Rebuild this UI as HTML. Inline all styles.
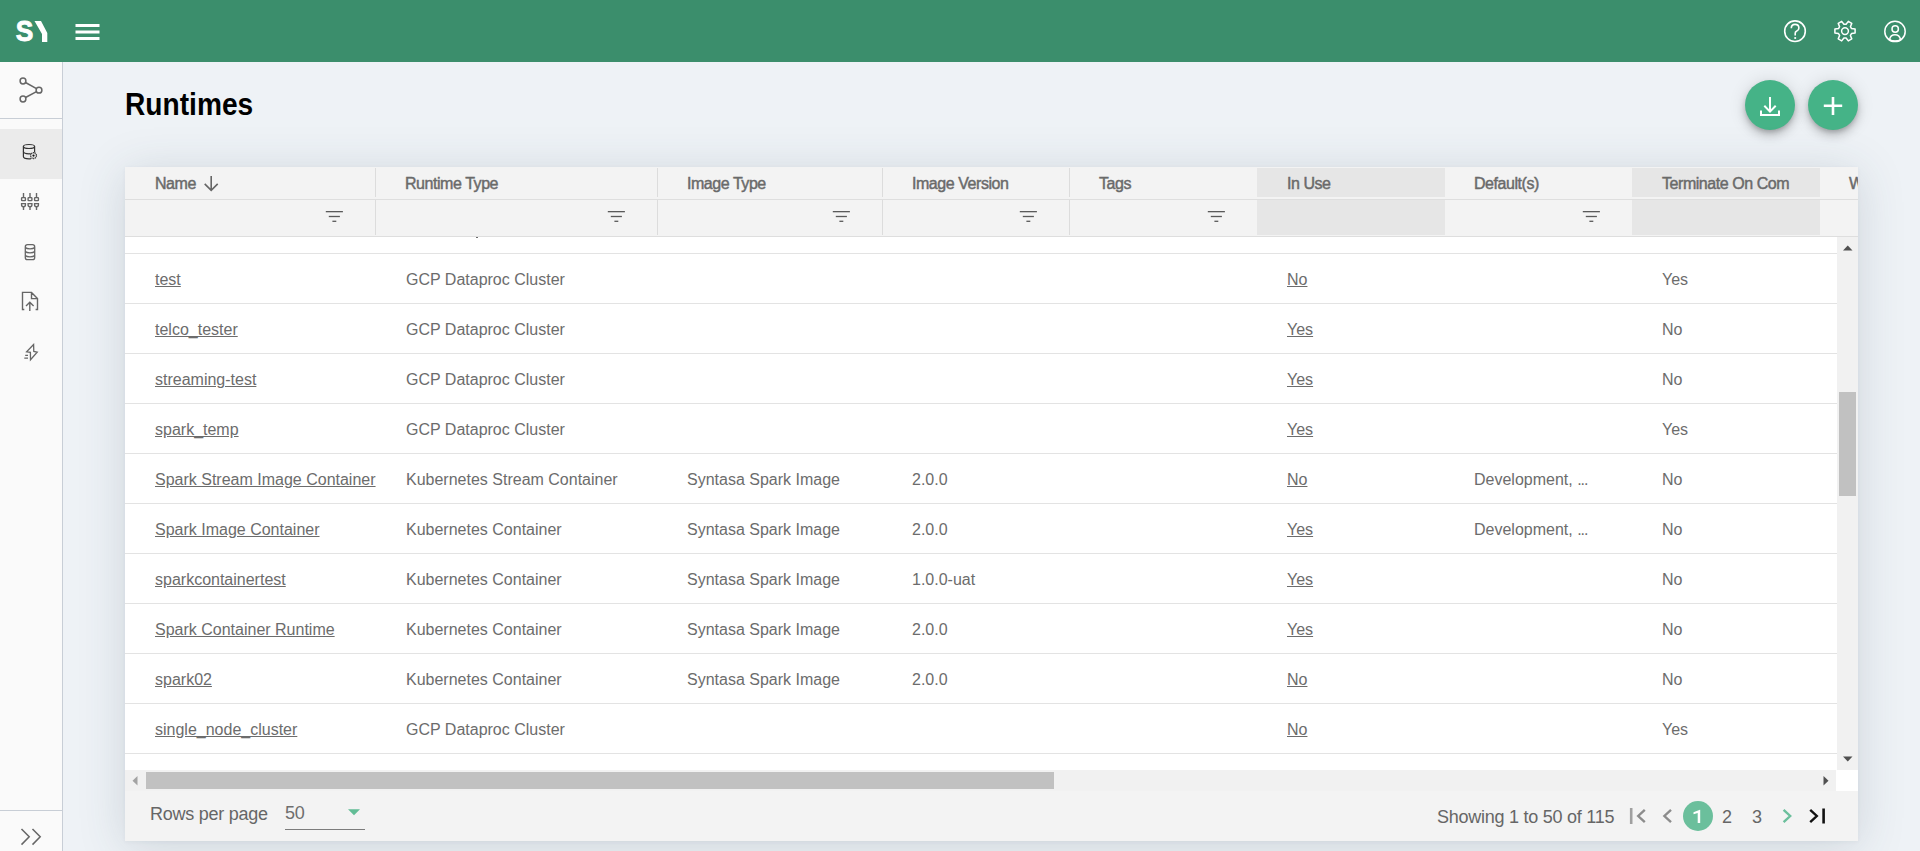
<!DOCTYPE html>
<html><head><meta charset="utf-8">
<style>
*{box-sizing:border-box;margin:0;padding:0}
html,body{width:1920px;height:851px;overflow:hidden;background:#eef2f6;font-family:"Liberation Sans",sans-serif;color:#6b6b6b}
.abs{position:absolute}
#top{position:absolute;left:0;top:0;width:1920px;height:62px;background:#3b8e6c}
#side{position:absolute;left:0;top:62px;width:63px;height:789px;background:#fafafa;border-right:1px solid #c8ced6}
#side .sep{position:absolute;left:0;width:62px;height:1px;background:#c8ced6}
#side .sel{position:absolute;left:0;top:67px;width:62px;height:50px;background:#ebebeb}
#side svg{position:absolute}
h1{position:absolute;left:125px;top:86px;font-size:31.7px;font-weight:bold;color:#000;transform:scaleX(0.888);transform-origin:0 0;white-space:nowrap}
.fab{position:absolute;top:80px;width:50px;height:50px;border-radius:50%;background:#45b387;box-shadow:0 3px 5px -1px rgba(0,0,0,.2),0 6px 10px 0 rgba(0,0,0,.14),0 1px 18px 0 rgba(0,0,0,.12)}
.fab svg{position:absolute;left:0;top:0}
#card{position:absolute;left:125px;top:167px;width:1733px;height:674px;background:#f3f3f3;box-shadow:0 6px 44px rgba(50,70,90,.17),0 1px 4px rgba(50,70,90,.05);overflow:hidden}
.hcell{position:absolute;top:1px;height:31px;font-size:16px;font-weight:normal;-webkit-text-stroke:0.45px currentColor;color:#6a6a6a;line-height:32px;padding-left:30px;white-space:nowrap;overflow:hidden;letter-spacing:-0.45px}
.vsep{position:absolute;width:1px;background:#dcdcdc}
.hline{position:absolute;left:0;height:1px;background:#dedede}
.gcell{position:absolute;background:#e6e6e6}
.filt{position:absolute}
#body{position:absolute;left:0;top:70px;width:1712px;height:533px;background:#fff;overflow:hidden}
.row{position:absolute;left:0;width:1712px;height:50px;border-bottom:1px solid #e3e3e3}
.c{position:absolute;top:1px;line-height:50px;font-size:16px;color:#6c6c6c;white-space:nowrap}
.u{text-decoration:underline;text-underline-offset:0.5px}
#vs{position:absolute;left:1712px;top:70px;width:21px;height:533px;background:#f1f1f1}
#hs{position:absolute;left:0;top:603px;width:1711px;height:21px;background:#f1f1f1}
#corner{position:absolute;left:1711px;top:603px;width:22px;height:21px;background:#fff}
#foot{position:absolute;left:0;top:624px;width:1733px;height:50px;background:#f3f3f3}
.ft{position:absolute;font-size:18px;color:#666;white-space:nowrap;letter-spacing:-0.25px}
</style></head><body>
<div id="top">
  <svg class="abs" style="left:0;top:0" width="120" height="62" viewBox="0 0 120 62">
    <text x="15.8" y="41.4" font-family="Liberation Sans" font-weight="bold" font-size="29.5" fill="#fff" stroke="#fff" stroke-width="0.9" textLength="17.6" lengthAdjust="spacingAndGlyphs">S</text>
    <path d="M34.5 21 L41 21 L47.3 33 L47.3 42 L42 42 L42 34 Z" fill="#fff"/>
    <rect x="75.5" y="24" width="24" height="3" fill="#fff"/>
    <rect x="75.5" y="30.5" width="24" height="3" fill="#fff"/>
    <rect x="75.5" y="37" width="24" height="3" fill="#fff"/>
  </svg>
  <svg class="abs" style="left:1770px;top:6px" width="150" height="50" viewBox="0 0 150 50">
    <g fill="none" stroke="#fff" stroke-width="1.6">
      <circle cx="25" cy="25.2" r="10.3"/>
      <path d="M21.3 22.2 C21.3 19.5 23 18.4 25 18.4 C27.3 18.4 28.9 19.9 28.9 21.9 C28.9 23.6 27.9 24.6 26.5 25.2 C25.5 25.7 25.2 26.3 25.2 27.2 V29.6"/>
    </g>
    <rect x="24.3" y="31.1" width="1.8" height="1.8" fill="#fff"/>
    <g fill="none" stroke="#fff" stroke-width="1.5" stroke-linejoin="round">
      <path d="M81.50 22.60 L85.10 23.10 L85.10 27.10 L81.50 27.60 L80.42 29.48 L81.78 32.85 L78.32 34.85 L76.08 31.98 L73.92 31.98 L71.68 34.85 L68.22 32.85 L69.58 29.48 L68.50 27.60 L64.90 27.10 L64.90 23.10 L68.50 22.60 L69.58 20.72 L68.22 17.35 L71.68 15.35 L73.92 18.22 L76.08 18.22 L78.32 15.35 L81.78 17.35 L80.42 20.72 Z"/>
      <circle cx="75" cy="25.1" r="3.4"/>
    </g>
    <g fill="none" stroke="#fff" stroke-width="1.5">
      <circle cx="125" cy="25.4" r="10.2"/>
      <circle cx="125.2" cy="23" r="3.2"/>
      <path d="M119.6 33.6 C120.2 30.3 122.5 28.8 125 28.8 C127.5 28.8 129.8 30.3 130.6 33.6 C128.5 35.4 121.7 35.4 119.6 33.6 Z"/>
    </g>
  </svg>
</div>
<div id="side">
  <div class="sep" style="top:56px"></div>
  <div class="sel"></div>
  <div class="sep" style="top:748px"></div>
  <svg style="left:0;top:0" width="62" height="789" viewBox="0 62 62 789">
    <g fill="none" stroke="#666" stroke-width="1.5">
      <circle cx="23" cy="81" r="2.9"/><circle cx="39" cy="90.2" r="2.9"/><circle cx="23" cy="99" r="2.9"/>
      <path d="M25.5 82.5 L36.5 88.7 M25.5 97.5 L36.5 91.7"/>
    </g>
    <g fill="none" stroke="#333" stroke-width="1.2">
      <ellipse cx="29" cy="146.5" rx="5.6" ry="2"/>
      <path d="M23.4 146.5 V156.5 C23.4 158 26 158.8 29 158.8 C29.8 158.8 30.5 158.7 31 158.6 M34.6 146.5 V152.5"/>
      <path d="M23.4 151.6 C23.4 153 26 153.8 29 153.8 C29.6 153.8 30.2 153.8 30.7 153.7"/>
    </g>
    <circle cx="33.5" cy="155.6" r="2.9" fill="none" stroke="#333" stroke-width="1.3" stroke-dasharray="1.2 0.6"/>
    <circle cx="33.5" cy="155.6" r="1.1" fill="#111"/>
    <g fill="none" stroke="#666" stroke-width="1.4">
      <path d="M23.5 193 V197.5 M23.5 206.5 V210 M30 193 V197.5 M30 206.5 V210 M36.5 193 V197.5 M36.5 206.5 V210"/>
      <rect x="21.6" y="197.6" width="3.8" height="3" rx="0.6"/><rect x="28.1" y="197.6" width="3.8" height="3" rx="0.6"/><rect x="34.6" y="197.6" width="3.8" height="3" rx="0.6"/>
      <path d="M21.6 203.6 H25.4 V205 C25.4 206.2 24.6 206.7 23.5 206.7 C22.4 206.7 21.6 206.2 21.6 205 Z M28.1 203.6 H31.9 V205 C31.9 206.2 31.1 206.7 30 206.7 C28.9 206.7 28.1 206.2 28.1 205 Z M34.6 203.6 H38.4 V205 C38.4 206.2 37.6 206.7 36.5 206.7 C35.4 206.7 34.6 206.2 34.6 205 Z"/>
    </g>
    <g fill="none" stroke="#666" stroke-width="1.3">
      <rect x="25.3" y="244.7" width="9.4" height="15" rx="2.2"/>
      <path d="M25.3 247.5 C27 249.3 33 249.3 34.7 247.5 M25.3 251.5 C27 253.3 33 253.3 34.7 251.5 M25.3 255.5 C27 257.3 33 257.3 34.7 255.5"/>
    </g>
    <g fill="none" stroke="#666" stroke-width="1.4">
      <path d="M24.3 309.5 H22.5 V292.4 H31.5 L37.5 298.6 V309.5 H35.6 M31.5 292.4 V298.6 H37.5 M29.8 311 V302.5 M26 306 L29.8 302.3 L33.6 306"/>
    </g>
    <g fill="none" stroke="#666" stroke-width="1.3" stroke-linejoin="miter">
      <path d="M33.6 344.5 L26.6 351.8 L30.4 352.4 L30.5 359.7 L37.2 352.1 L33.8 351.4 Z"/>
      <path d="M25.2 355.3 H28 M24.3 358.2 H28"/>
    </g>
    <path d="M21.5 829 L29.2 836.8 L21.5 844.6 M32.5 829 L40.2 836.8 L32.5 844.6" fill="none" stroke="#666" stroke-width="1.5"/>
  </svg>
</div>
<h1>Runtimes</h1>
<div class="fab" style="left:1745px"><svg width="50" height="50" viewBox="0 0 50 50"><g fill="none" stroke="#fff" stroke-width="2"><path d="M25 17 V31.5 M19.3 25.8 L25 31.6 L30.7 25.8"/><path d="M16 30.6 V35 H34 V30.6"/></g></svg></div>
<div class="fab" style="left:1808px"><svg width="50" height="50" viewBox="0 0 50 50"><g fill="none" stroke="#fff" stroke-width="2.6"><path d="M25 17 V35 M15.8 25.8 H34.2"/></g></svg></div>
<div id="card">
<div class="hcell" style="left:0px;width:250px">Name</div>
<svg class="filt" style="left:200px;top:40px" width="18" height="18" viewBox="0 0 18 18"><g fill="#5a5a5a"><rect x="0.8" y="4.0" width="17.1" height="1.3"/><rect x="3.8" y="8.85" width="11.1" height="1.3"/><rect x="7.4" y="13.65" width="3.9" height="1.3"/></g></svg>
<div class="hcell" style="left:250px;width:282px">Runtime Type</div>
<div class="vsep" style="left:250px;top:1px;height:29px"></div>
<div class="vsep" style="left:250px;top:33px;height:35px"></div>
<svg class="filt" style="left:482px;top:40px" width="18" height="18" viewBox="0 0 18 18"><g fill="#5a5a5a"><rect x="0.8" y="4.0" width="17.1" height="1.3"/><rect x="3.8" y="8.85" width="11.1" height="1.3"/><rect x="7.4" y="13.65" width="3.9" height="1.3"/></g></svg>
<div class="hcell" style="left:532px;width:225px">Image Type</div>
<div class="vsep" style="left:532px;top:1px;height:29px"></div>
<div class="vsep" style="left:532px;top:33px;height:35px"></div>
<svg class="filt" style="left:707px;top:40px" width="18" height="18" viewBox="0 0 18 18"><g fill="#5a5a5a"><rect x="0.8" y="4.0" width="17.1" height="1.3"/><rect x="3.8" y="8.85" width="11.1" height="1.3"/><rect x="7.4" y="13.65" width="3.9" height="1.3"/></g></svg>
<div class="hcell" style="left:757px;width:187px">Image Version</div>
<div class="vsep" style="left:757px;top:1px;height:29px"></div>
<div class="vsep" style="left:757px;top:33px;height:35px"></div>
<svg class="filt" style="left:894px;top:40px" width="18" height="18" viewBox="0 0 18 18"><g fill="#5a5a5a"><rect x="0.8" y="4.0" width="17.1" height="1.3"/><rect x="3.8" y="8.85" width="11.1" height="1.3"/><rect x="7.4" y="13.65" width="3.9" height="1.3"/></g></svg>
<div class="hcell" style="left:944px;width:188px">Tags</div>
<div class="vsep" style="left:944px;top:1px;height:29px"></div>
<div class="vsep" style="left:944px;top:33px;height:35px"></div>
<svg class="filt" style="left:1082px;top:40px" width="18" height="18" viewBox="0 0 18 18"><g fill="#5a5a5a"><rect x="0.8" y="4.0" width="17.1" height="1.3"/><rect x="3.8" y="8.85" width="11.1" height="1.3"/><rect x="7.4" y="13.65" width="3.9" height="1.3"/></g></svg>
<div class="gcell" style="left:1132px;top:1px;width:188px;height:29px"></div>
<div class="gcell" style="left:1132px;top:33px;width:188px;height:35px"></div>
<div class="hcell" style="left:1132px;width:187px">In Use</div>
<div class="hcell" style="left:1319px;width:188px">Default(s)</div>
<svg class="filt" style="left:1457px;top:40px" width="18" height="18" viewBox="0 0 18 18"><g fill="#5a5a5a"><rect x="0.8" y="4.0" width="17.1" height="1.3"/><rect x="3.8" y="8.85" width="11.1" height="1.3"/><rect x="7.4" y="13.65" width="3.9" height="1.3"/></g></svg>
<div class="gcell" style="left:1507px;top:1px;width:188px;height:29px"></div>
<div class="gcell" style="left:1507px;top:33px;width:188px;height:35px"></div>
<div class="hcell" style="left:1507px;width:187px">Terminate On Com</div>
<div class="hcell" style="left:1694px;width:187px">W</div>
<svg class="abs" style="left:77px;top:7px" width="18" height="18" viewBox="0 0 18 18"><path d="M9.2 2V16.3M2.7 9.9L9.2 16.4L15.7 9.9" fill="none" stroke="#666" stroke-width="1.6"/></svg>
<div class="hline" style="top:32px;width:1733px"></div>
<div class="hline" style="top:69px;width:1733px"></div>
<div id="body">
<div class="row" style="top:-33px">
</div>
<div class="row" style="top:17px">
<span class="c u" style="left:30px">test</span>
<span class="c" style="left:281px">GCP Dataproc Cluster</span>
<span class="c u" style="left:1162px">No</span>
<span class="c" style="left:1537px">Yes</span>
</div>
<div class="row" style="top:67px">
<span class="c u" style="left:30px">telco_tester</span>
<span class="c" style="left:281px">GCP Dataproc Cluster</span>
<span class="c u" style="left:1162px">Yes</span>
<span class="c" style="left:1537px">No</span>
</div>
<div class="row" style="top:117px">
<span class="c u" style="left:30px">streaming-test</span>
<span class="c" style="left:281px">GCP Dataproc Cluster</span>
<span class="c u" style="left:1162px">Yes</span>
<span class="c" style="left:1537px">No</span>
</div>
<div class="row" style="top:167px">
<span class="c u" style="left:30px">spark_temp</span>
<span class="c" style="left:281px">GCP Dataproc Cluster</span>
<span class="c u" style="left:1162px">Yes</span>
<span class="c" style="left:1537px">Yes</span>
</div>
<div class="row" style="top:217px">
<span class="c u" style="left:30px">Spark Stream Image Container</span>
<span class="c" style="left:281px">Kubernetes Stream Container</span>
<span class="c" style="left:562px">Syntasa Spark Image</span>
<span class="c" style="left:787px">2.0.0</span>
<span class="c u" style="left:1162px">No</span>
<span class="c" style="left:1349px">Development, <span style="letter-spacing:-1px">...</span></span>
<span class="c" style="left:1537px">No</span>
</div>
<div class="row" style="top:267px">
<span class="c u" style="left:30px">Spark Image Container</span>
<span class="c" style="left:281px">Kubernetes Container</span>
<span class="c" style="left:562px">Syntasa Spark Image</span>
<span class="c" style="left:787px">2.0.0</span>
<span class="c u" style="left:1162px">Yes</span>
<span class="c" style="left:1349px">Development, <span style="letter-spacing:-1px">...</span></span>
<span class="c" style="left:1537px">No</span>
</div>
<div class="row" style="top:317px">
<span class="c u" style="left:30px">sparkcontainertest</span>
<span class="c" style="left:281px">Kubernetes Container</span>
<span class="c" style="left:562px">Syntasa Spark Image</span>
<span class="c" style="left:787px">1.0.0-uat</span>
<span class="c u" style="left:1162px">Yes</span>
<span class="c" style="left:1537px">No</span>
</div>
<div class="row" style="top:367px">
<span class="c u" style="left:30px">Spark Container Runtime</span>
<span class="c" style="left:281px">Kubernetes Container</span>
<span class="c" style="left:562px">Syntasa Spark Image</span>
<span class="c" style="left:787px">2.0.0</span>
<span class="c u" style="left:1162px">Yes</span>
<span class="c" style="left:1537px">No</span>
</div>
<div class="row" style="top:417px">
<span class="c u" style="left:30px">spark02</span>
<span class="c" style="left:281px">Kubernetes Container</span>
<span class="c" style="left:562px">Syntasa Spark Image</span>
<span class="c" style="left:787px">2.0.0</span>
<span class="c u" style="left:1162px">No</span>
<span class="c" style="left:1537px">No</span>
</div>
<div class="row" style="top:467px">
<span class="c u" style="left:30px">single_node_cluster</span>
<span class="c" style="left:281px">GCP Dataproc Cluster</span>
<span class="c u" style="left:1162px">No</span>
<span class="c" style="left:1537px">Yes</span>
</div>
<div class="row" style="top:517px">
</div>
<div style="position:absolute;left:351px;top:0;width:2px;height:1px;background:#6a6a6a"></div>
</div>
<div id="vs"><div class="abs" style="left:2px;top:155px;width:17px;height:104px;background:#c1c1c1"></div><svg class="abs" style="left:6px;top:8px" width="10" height="6"><path d="M0 5.5L4.75 0.5 9.5 5.5Z" fill="#505050"/></svg><svg class="abs" style="left:6px;top:519px" width="10" height="6"><path d="M0 0.5L4.75 5.5 9.5 0.5Z" fill="#505050"/></svg></div>
<div id="hs"><div class="abs" style="left:21px;top:2px;width:908px;height:17px;background:#c1c1c1"></div><svg class="abs" style="left:7px;top:6px" width="6" height="10"><path d="M5.5 0L0.5 4.75 5.5 9.5Z" fill="#a3a3a3"/></svg><svg class="abs" style="left:1698px;top:6px" width="6" height="10"><path d="M0.5 0L5.5 4.75 0.5 9.5Z" fill="#505050"/></svg></div>
<div id="corner"></div>
<div id="foot">
<span class="ft" style="left:25px;top:13px">Rows per page</span>
<span class="ft" style="left:160px;top:12px;color:#6e6e6e">50</span>
<svg class="abs" style="left:223px;top:18px" width="13" height="7"><path d="M0 0.2H12L6 6.2Z" fill="#62bd96"/></svg>
<div class="abs" style="left:160px;top:38px;width:80px;height:1px;background:#7c7c7c"></div>
<span class="ft" style="left:1312px;top:16px">Showing 1 to 50 of 115</span>
<svg class="abs" style="left:1490px;top:0" width="243" height="50" viewBox="1615 791 243 50"><g fill="none" stroke-width="2.4"><path d="M1631.2 808 V824" stroke="#a0a0a0" stroke-width="2.6"/><path d="M1644.8 809.8 L1638.2 816 L1644.8 822.2" stroke="#8c8c8c"/><path d="M1671 809.8 L1664.4 816 L1671 822.2" stroke="#8c8c8c"/><path d="M1783.6 809.8 L1790.2 816 L1783.6 822.2" stroke="#6bbf9c"/><path d="M1810.2 809.8 L1816.8 816 L1810.2 822.2" stroke="#111"/><path d="M1823.6 808.5 V823.5" stroke="#111" stroke-width="2.6"/></g><circle cx="1698" cy="816" r="15" fill="#6bbf9c"/><path d="M1700.2 809.8 V823 H1697.7 V812.9 L1693.5 814.3 V812.2 L1699.9 809.8 Z" fill="#fff"/></svg>
<span class="ft" style="left:1597px;top:16px">2</span>
<span class="ft" style="left:1627px;top:16px">3</span>
</div>
</div>
</body></html>
